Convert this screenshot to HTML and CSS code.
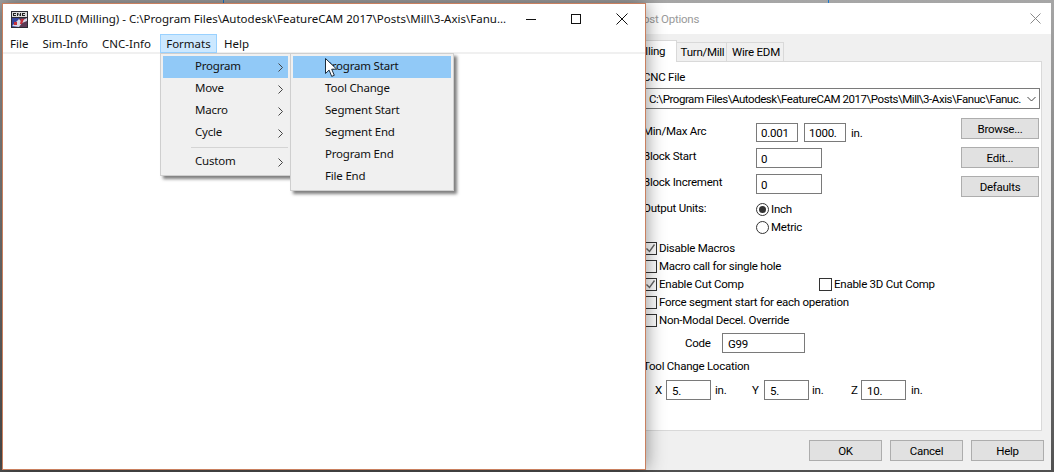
FILE: index.html
```html
<!DOCTYPE html>
<html lang="en">
<head>
<meta charset="utf-8">
<title>XBUILD</title>
<link rel="stylesheet" href="styles.css">
</head>
<body>
<div class="desktop">
  <span class="tick tick-a"></span>
  <span class="tick tick-b"></span>

  <section class="dialog">
    <header class="dlg-title">
      <span class="dlg-name">Post Options</span>
      <svg class="dlg-close" width="11" height="11" viewBox="0 0 11 11"><path d="M.5.5l10 10M10.5.5l-10 10" stroke="#8a8a8a" fill="none"/></svg>
    </header>
    <div class="dlg-body">
      <div class="tabs">
        <span class="tab tab-on">Milling</span>
        <span class="tab tab-turn">Turn/Mill</span>
        <span class="tab tab-wire">Wire EDM</span>
      </div>
      <div class="page">
        <div class="lbl cnc-label">CNC File</div>
        <div class="combo">
          <span class="combo-text">C:\Program Files\Autodesk\FeatureCAM 2017\Posts\Mill\3-Axis\Fanuc\Fanuc.</span>
          <svg width="9" height="6" viewBox="0 0 9 6"><path d="M.5 1l4 4 4-4" stroke="#444" fill="none"/></svg>
        </div>
        <div class="upper">
          <div class="fields">
            <div class="row row-arc">
              <span class="lbl lcol">Min/Max Arc</span>
              <span class="inp w42">0.001</span>
              <span class="inp w42 gap6">1000.</span>
              <span class="unit">in.</span>
            </div>
            <div class="row row-block">
              <span class="lbl lcol">Block Start</span>
              <span class="inp w66">0</span>
            </div>
            <div class="row row-block">
              <span class="lbl lcol">Block Increment</span>
              <span class="inp w66">0</span>
            </div>
            <div class="row row-radio">
              <span class="lbl lcol lcol-units">Output Units:</span>
              <span class="radio radio-on"></span><span class="rlabel">Inch</span>
            </div>
            <div class="row row-radio">
              <span class="lcol"></span>
              <span class="radio"></span><span class="rlabel">Metric</span>
            </div>
          </div>
          <div class="side">
            <span class="btn side-btn">Browse...</span>
            <span class="btn side-btn">Edit...</span>
            <span class="btn side-btn">Defaults</span>
          </div>
        </div>
        <div class="checks">
          <div class="chk-row"><span class="box box-on"><svg width="11" height="11" viewBox="0 0 11 11"><path d="M1.5 5.5l3 3 5-7" stroke="#666" stroke-width="1.4" fill="none"/></svg></span>Disable Macros</div>
          <div class="chk-row"><span class="box"></span>Macro call for single hole</div>
          <div class="chk-row"><span class="box box-on"><svg width="11" height="11" viewBox="0 0 11 11"><path d="M1.5 5.5l3 3 5-7" stroke="#666" stroke-width="1.4" fill="none"/></svg></span><span class="cut-comp">Enable Cut Comp</span><span class="box"></span>Enable 3D Cut Comp</div>
          <div class="chk-row"><span class="box"></span>Force segment start for each operation</div>
          <div class="chk-row"><span class="box"></span>Non-Modal Decel. Override</div>
        </div>
        <div class="code-row"><span class="code-label">Code</span><span class="inp w83">G99</span></div>
        <div class="lbl tool-label">Tool Change Location</div>
        <div class="xyz">
          <span class="axis ax-x">X</span><span class="inp w45">5.</span><span class="xunit u1">in.</span>
          <span class="axis ax-y">Y</span><span class="inp w45">5.</span><span class="xunit u2">in.</span>
          <span class="axis ax-z">Z</span><span class="inp w45">10.</span><span class="xunit u3">in.</span>
        </div>
      </div>
      <div class="actions">
        <span class="btn act-btn">OK</span>
        <span class="btn act-btn">Cancel</span>
        <span class="btn act-btn">Help</span>
      </div>
    </div>
  </section>

  <section class="main">
    <header class="win-title">
      <svg class="app-icon" width="17" height="17" viewBox="0 0 17 17">
        <rect width="17" height="17" fill="#2b2b33"/>
        <rect x="1" y="1" width="15" height="5" fill="#dcdcdc"/>
        <path d="M2 2h3v1H3v1h2v1H2zM6 2h1l2 2V2h1v3H9L7 3v2H6zM11 2h3v1h-2v1h2v1h-3z" fill="#222"/>
        <rect x="1" y="7" width="7" height="9" fill="#34449c"/>
        <rect x="8" y="7" width="8" height="9" fill="#5d3a55"/>
        <path d="M1 15l7-7 2 2 6-3v3l-5 2-3 4z" fill="#d9d9e8"/>
        <path d="M10 8h3l-2 5H9zM3 11h3v3H3z" fill="#c5303a"/>
      </svg>
      <span class="win-name">XBUILD (Milling) - C:\Program Files\Autodesk\FeatureCAM 2017\Posts\Mill\3-Axis\Fanu...</span>
      <div class="caption">
        <svg width="10" height="10" viewBox="0 0 10 10"><path d="M0 5.5h10" stroke="#111" fill="none"/></svg>
        <svg width="10" height="10" viewBox="0 0 10 10"><rect x=".5" y=".5" width="9" height="9" stroke="#111" fill="none"/></svg>
        <svg class="cap-x" width="12" height="12" viewBox="0 0 12 12"><path d="M.5.5l11 11M11.5.5l-11 11" stroke="#111" fill="none"/></svg>
      </div>
    </header>
    <nav class="menubar">
      <span class="mi">File</span>
      <span class="mi">Sim-Info</span>
      <span class="mi">CNC-Info</span>
      <span class="mi mi-on">Formats</span>
      <span class="mi">Help</span>
    </nav>
  </section>

  <div class="menu menu-1">
    <div class="item item-on"><span>Program</span><svg width="5" height="9" viewBox="0 0 5 9"><path d="M.5.5l4 4-4 4" stroke="#444" fill="none"/></svg></div>
    <div class="item"><span>Move</span><svg width="5" height="9" viewBox="0 0 5 9"><path d="M.5.5l4 4-4 4" stroke="#444" fill="none"/></svg></div>
    <div class="item"><span>Macro</span><svg width="5" height="9" viewBox="0 0 5 9"><path d="M.5.5l4 4-4 4" stroke="#444" fill="none"/></svg></div>
    <div class="item"><span>Cycle</span><svg width="5" height="9" viewBox="0 0 5 9"><path d="M.5.5l4 4-4 4" stroke="#444" fill="none"/></svg></div>
    <div class="sep"></div>
    <div class="item"><span>Custom</span><svg width="5" height="9" viewBox="0 0 5 9"><path d="M.5.5l4 4-4 4" stroke="#444" fill="none"/></svg></div>
  </div>

  <div class="menu menu-2">
    <div class="item item-on"><span>Program Start</span></div>
    <div class="item"><span>Tool Change</span></div>
    <div class="item"><span>Segment Start</span></div>
    <div class="item"><span>Segment End</span></div>
    <div class="item"><span>Program End</span></div>
    <div class="item"><span>File End</span></div>
  </div>

  <svg class="cursor" width="13" height="20" viewBox="0 0 13 20"><path d="M.5.5v15l3.6-3.4 2.6 6.3 2.6-1.1-2.6-6.1h5z" fill="#fff" stroke="#1c2c3c"/></svg>
</div>
</body>
</html>
```
FILE: styles.css
```css
* { box-sizing: border-box; }
html, body { margin: 0; height: 100%; overflow: hidden; }
body { font: 11.5px/16px "Noto Sans", "Open Sans", sans-serif; color: #111; }
.desktop { position: relative; width: 1054px; height: 472px; overflow: hidden; background: linear-gradient(#a6a6a6 0, #a0a0a0 30px, #5a5a5a 440px, #505050 100%); }
.tick { position: absolute; top: 0; width: 1px; height: 3px; background: #1a7ad0; }
.tick-a { left: 223px; }
.tick-b { left: 828px; }

/* Dialog window behind */
.dialog { position: absolute; z-index: 0; left: 629px; top: 3px; width: 422px; height: 467px; display: flex; flex-direction: column; background: #f0f0f0; color: #000; font: 11.5px/16px Roboto, "Noto Sans", sans-serif; letter-spacing: -.25px; }
.dlg-title { height: 31px; flex: none; background: #fff; display: flex; align-items: center; justify-content: space-between; padding: 0 10px 0 7px; }
.dlg-name { color: #9a9a9a; }
.dlg-body { flex: 1; display: flex; flex-direction: column; }
.tabs { height: 28px; flex: none; display: flex; align-items: flex-end; position: relative; z-index: 1; margin-bottom: -1px; }
.tab { height: 20px; border: 1px solid #d9d9d9; border-left: 0; background: #f0f0f0; display: flex; align-items: center; justify-content: center; padding-left: 2px; }
.tab-on { height: 22px; width: 48px; justify-content: flex-start; padding: 0 0 2px 4px; background: #fff; border-bottom: 0; }
.tab-turn { width: 50px; }
.tab-wire { width: 57px; }
.page { width: 413px; height: 370px; background: #fff; border: 1px solid #d9d9d9; padding-left: 13px; display: flex; flex-direction: column; flex: none; }
.lbl { white-space: nowrap; }
.cnc-label { margin-top: 7px; height: 16px; }
.combo { height: 21px; margin-top: 3px; margin-left: -2px; width: 399px; flex: none; border: 1px solid #7a7a7a; display: flex; align-items: center; justify-content: space-between; padding: 0 3px 0 7px; white-space: nowrap; }
.combo-text { letter-spacing: -.45px; }
.upper { display: flex; justify-content: space-between; width: 396px; margin-top: 8px; }
.fields { display: flex; flex-direction: column; padding-top: 6px; }
.side { display: flex; flex-direction: column; gap: 8px; padding-top: 1px; }
.row { display: flex; align-items: center; }
.row-arc { height: 19px; margin-bottom: 6px; }
.row-block { height: 20px; margin-bottom: 6px; }
.row-radio { height: 18px; }
.lcol { width: 113px; flex: none; position: relative; top: -2px; }
.lcol-units { top: -1px; }
.inp { display: flex; align-items: center; height: 100%; border: 1px solid #7a7a7a; background: #fff; padding: 1px 0 0 4px; flex: none; }
.w42 { width: 42px; }
.w66 { width: 66px; }
.w83 { width: 83px; padding-left: 5px; }
.w45 { width: 45px; padding-left: 5px; }
.gap6 { margin-left: 6px; }
.unit { margin-left: 5px; }
.btn { display: flex; align-items: center; justify-content: center; background: #e1e1e1; border: 1px solid #adadad; }
.side-btn { width: 78px; height: 21px; }
.radio { width: 13px; height: 13px; border: 1px solid #333; border-radius: 50%; background: #fff; flex: none; display: flex; align-items: center; justify-content: center; }
.radio-on::after { content: ""; width: 7px; height: 7px; border-radius: 50%; background: #333; }
.rlabel { margin-left: 2px; }
.checks { margin-top: 3px; display: flex; flex-direction: column; margin-left: 1px; }
.chk-row { height: 18px; display: flex; align-items: center; white-space: nowrap; }
.box { width: 13px; height: 13px; border: 1px solid #333; background: #fff; flex: none; margin-right: 2px; display: flex; align-items: center; justify-content: center; }
.cut-comp { width: 160px; }
.code-row { display: flex; align-items: center; height: 20px; margin-top: 4px; }
.code-label { width: 79px; padding-left: 42px; flex: none; }
.tool-label { margin-top: 5px; height: 16px; }
.xyz { display: flex; align-items: center; height: 20px; margin-top: 6px; }
.axis { flex: none; }
.ax-x { margin-left: 12px; width: 11px; }
.ax-y { width: 12px; }
.ax-z { width: 10px; }
.xunit { margin-left: 4px; }
.u1 { width: 37px; flex: none; }
.u2 { width: 39px; flex: none; margin-left: 3px; }
.u3 { margin-left: 5px; }
.actions { display: flex; gap: 8px; justify-content: flex-end; padding: 9px 7px 0 0; }
.act-btn { width: 73px; height: 21px; }

/* Main window */
.main { position: absolute; left: 2px; top: 3px; width: 644px; height: 467px; background: #fff; border: 1px solid #c9805f; box-shadow: 0 0 18px rgba(0,0,0,.45); }
.win-title { height: 30px; display: flex; align-items: center; padding-left: 8px; }
.app-icon { flex: none; }
.win-name { margin-left: 4px; white-space: nowrap; width: 488px; }
.caption { display: flex; align-items: center; }
.caption svg { margin-left: 35px; }
.caption svg:first-child { margin-left: 6px; }
.menubar { height: 20px; display: flex; border-bottom: 2px solid #f0f0f0; padding-left: 0; position: relative; }
.mi { padding: 0 7px; height: 19px; display: flex; align-items: center; }
.mi-on { background: #cce8ff; border: 1px solid #99d1ff; padding: 0; width: 57px; justify-content: center; margin-left: 2px; }

/* Menus */
.menu { position: absolute; top: 53px; background: #f0f0f0; border: 1px solid #cfcfcf; padding: 2px; box-shadow: 3px 3px 3px rgba(0,0,0,.5); letter-spacing: -.2px; }
.menu-1 { left: 160px; width: 131px; }
.menu-2 { left: 290px; width: 164px; }
.item { height: 22px; display: flex; align-items: center; justify-content: space-between; padding: 0 5px 2px 32px; white-space: nowrap; }
.item svg { position: relative; top: 1px; }
.item-on { background: #91c9f7; }
.sep { height: 1px; background: #d4d4d4; margin: 3px 0 3px 28px; }
.cursor { position: absolute; left: 325px; top: 58px; }
```
